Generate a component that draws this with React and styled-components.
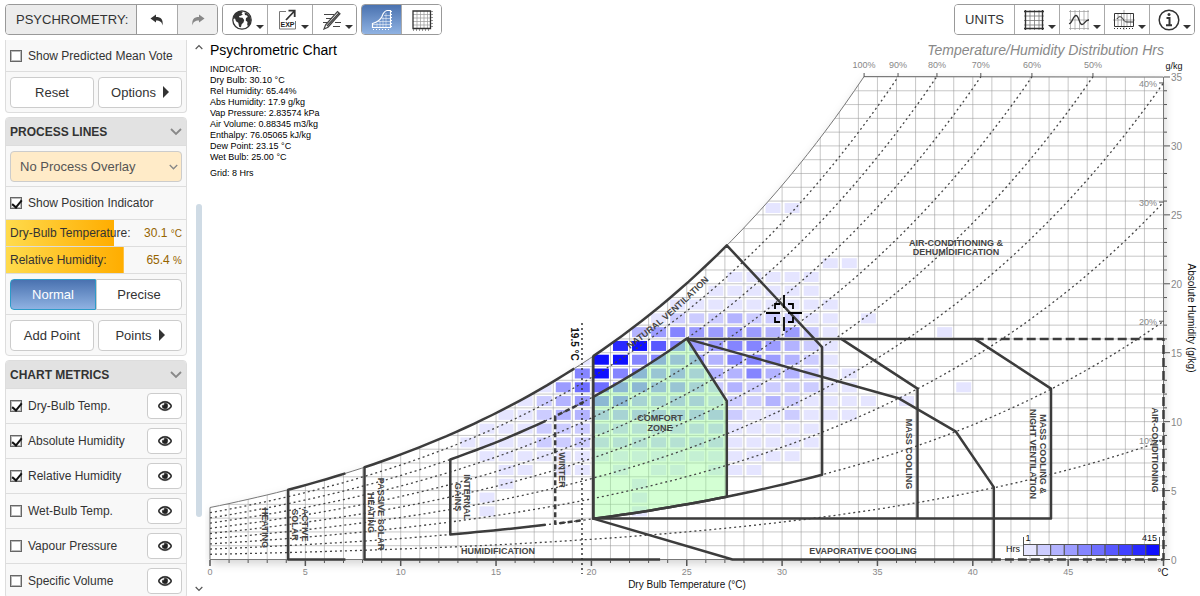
import { useState } from "react"
import styled, { createGlobalStyle, css } from "styled-components"
import { FaRegEye } from "react-icons/fa"

const GlobalStyle = createGlobalStyle`
* {
  box-sizing: border-box;
}
body {
  margin: 0;
  background: #fff;
  color: #333;
  font-family: "Liberation Sans", Arial, sans-serif;
}
button, select, input {
  font-family: inherit;
}
`

/* ---------- layout ---------- */

const Page = styled.div`
display: flex;
flex-direction: column;
height: 100vh;
min-height: 500px;
overflow: hidden;
`

const Toolbar = styled.header`
display: flex;
gap: 4px;
padding: 4px 5px 3px;
`

const Group = styled.div`
display: flex;
height: 31px;
border: 1px solid #999;
border-radius: 4px;
overflow: hidden;
background: #fff;
${({ $right }) => $right && css`margin-left: auto;`}
`

const ToolLabel = styled.h1`
display: flex;
align-items: center;
margin: 0;
padding: 0 8px 0 10px;
background: #ececec;
font-size: 13px;
font-weight: normal;
color: #333;
border-right: 1px solid #999;
`

const ToolButton = styled.button`
position: relative;
display: flex;
align-items: center;
justify-content: center;
width: ${({ $width }) => $width || 45}px;
padding: 0;
border: none;
border-right: 1px solid #aaa;
background: ${({ $active, disabled }) =>
    $active ? "linear-gradient(#4a72b0, #8fb2e2)" : disabled ? "#f0f0f0" : "#fff"};
color: ${({ $active, disabled }) => ($active ? "#fff" : disabled ? "#888" : "#333")};
font-size: 13px;

&:last-child {
  border-right: none;
}

${({ $menu }) => $menu && css`
padding-right: 6px;

&::after {
  content: "";
  position: absolute;
  right: 3px;
  bottom: 5px;
  border: 4px solid transparent;
  border-top-color: #333;
  border-bottom: none;
}
`}
`

const Main = styled.main`
display: grid;
grid-template-columns: 187px 18px 1fr;
flex: 1;
min-height: 0;
`

const Sidebar = styled.aside`
padding: 2px 0 0 5px;
overflow: hidden;
`

const Panel = styled.section`
margin-bottom: 4px;
border: 1px solid #ddd;
border-radius: 4px;
background: #f8f8f8;
overflow: hidden;
${({ $cut }) => $cut && css`
border-top: none;
border-radius: 0 0 4px 4px;
`}
`

const PanelHead = styled.h2`
display: flex;
align-items: center;
justify-content: space-between;
height: 27px;
margin: 0;
padding: 0 4px;
background: #e2e2e2;
font-size: 12px;
color: #333;
`

const Row = styled.div`
display: flex;
align-items: center;
justify-content: space-between;
gap: 4px;
height: ${({ $height }) => $height || 41}px;
padding: 0 4px;
border-top: 1px solid #ddd;

&:first-child {
  border-top: none;
}
`

const CheckLabel = styled.label`
display: flex;
align-items: center;
gap: 6px;
font-size: 12px;
`

const Checkbox = styled.input`
appearance: none;
position: relative;
width: 12px;
height: 12px;
margin: 0;
border: 1px solid #666;
background: #fff;
box-shadow: inset 0 0 0 1px #bbb;

&:checked::after {
  content: "";
  position: absolute;
  left: 3px;
  top: 0;
  width: 4px;
  height: 8px;
  border: solid #111;
  border-width: 0 2px 2px 0;
  transform: rotate(40deg);
}
`

const PanelButton = styled.button`
display: flex;
flex: 1;
align-items: center;
justify-content: center;
gap: 7px;
height: 31px;
padding: 0;
border: 1px solid #ccc;
border-radius: 4px;
background: #fff;
color: #333;
font-size: 13px;
`

const EyeButton = styled(PanelButton)`
flex: none;
width: 35px;
height: 26px;
font-size: 14px;
color: #222;

svg {
  stroke: #222;
  stroke-width: 22px;
}
`

const Arrow = styled.span`
border: 6px solid transparent;
border-left: 6px solid #333;
border-right: none;
`

const SelectWrap = styled.div`
position: relative;
flex: 1;
`

const Select = styled.select`
appearance: none;
width: 100%;
height: 31px;
padding: 0 9px;
border: 1px solid #ccc;
border-radius: 4px;
background: #ffebc8;
color: #555;
font-size: 13px;
`

const SelectMark = styled.span`
position: absolute;
right: 4px;
top: 13px;
line-height: 0;
pointer-events: none;
`

const SliderRow = styled.div`
position: relative;
display: flex;
height: 27px;
border-top: 1px solid #ddd;
`

const Slider = styled.input`
appearance: none;
width: 100%;
height: 26px;
margin: 0;
background: linear-gradient(to right, #ffdb4d, #ffad00) no-repeat;
background-size: ${({ $fill }) => $fill}% 100%;

&::-webkit-slider-thumb {
  appearance: none;
  width: 1px;
  height: 26px;
}
`

const SliderText = styled.label`
position: absolute;
inset: 0;
display: flex;
align-items: center;
justify-content: space-between;
padding: 0 4px;
font-size: 12px;
pointer-events: none;
`

const SliderValue = styled.output`
color: #966400;

small {
  font-size: 10px;
}
`

const Segments = styled.div`
display: flex;
flex: 1;
height: 31px;
`

const Segment = styled.button`
flex: 1;
padding: 0;
border: 1px solid ${({ $active }) => ($active ? "#2d9bc8" : "#ccc")};
background: ${({ $active }) => ($active ? "linear-gradient(#4a72b0, #8fb2e2)" : "#fff")};
color: ${({ $active }) => ($active ? "#fff" : "#333")};
font-size: 13px;

&:first-child {
  border-radius: 4px 0 0 4px;
}
&:last-child {
  border-radius: 0 4px 4px 0;
}
`

const ScrollRail = styled.div`
display: flex;
flex-direction: column;
align-items: center;
padding: 6px 0 4px 6px;
`

const ScrollGap = styled.div`
flex: ${({ $size }) => $size};
`

const ScrollThumb = styled.div`
flex: 308;
width: 6px;
border-radius: 3px;
background: #cfdbe5;
`

const ChartArea = styled.section`
position: relative;
min-width: 0;
`

const ChartOverlay = styled.div`
position: absolute;
inset: 4px 36px auto 5px;
display: flex;
justify-content: space-between;
color: #000;
`

const ChartTitle = styled.h2`
margin: 0 0 5px;
font-size: 14px;
line-height: 17px;
font-weight: normal;
`

const ChartCaption = styled.p`
margin: 0;
color: #888;
font-size: 14px;
line-height: 17px;
font-style: italic;
`

const Readout = styled.p`
margin: 0 0 5px;
font-size: 9px;
line-height: 11px;
white-space: pre-line;
`

const ChartSvg = styled.svg`
display: block;
width: 100%;
height: auto;
`

const ZoneText = styled.text`
fill: #444;
font-size: 9px;
font-weight: bold;
text-anchor: middle;
dominant-baseline: central;
`

const AxisText = styled.text`
fill: ${({ $dark }) => ($dark ? "#111" : "#888")};
font-size: ${({ $size }) => $size || 9}px;
text-anchor: ${({ $anchor }) => $anchor || "middle"};
dominant-baseline: central;
`

/* ---------- icons ---------- */

const Chevron = ({ w = 12, flip, color = "#888" }) => (
  <svg width={w} height={w / 2 + 2} viewBox="0 0 12 8" fill="none" stroke={color} strokeWidth="1.8">
    <path d={flip ? "M1 7 6 2l5 5" : "M1 1l5 5 5-5"} />
  </svg>
)

const UndoIcon = ({ flip }) => (
  <svg width="14" height="14" viewBox="0 0 14 14" fill="currentColor">
    <path
      transform={flip ? "matrix(-1 0 0 1 14 0)" : undefined}
      d="M.5 5.500 6 1.500v2.500c5 0 7.500 2.500 6.500 8.500-.6-3.600-2.500-5-6.500-5V9.500z"
    />
  </svg>
)

const GlobeIcon = () => (
  <svg width="20" height="20" viewBox="0 0 20 20">
    <circle cx="10" cy="10" r="9.200" fill="#fff" stroke="#333" strokeWidth="1.300" />
    <path
      fill="#333"
      d="M1 9C1.500 5 4.500 1.800 8.500 1l2.500.8-1.500 1.700 1.300 1-2 1.300L7 6l.5 1.500 3 .3 1.700 2.200-.7 2.500-1.800 1.800-.8 3-1.800-.5-.8-4-2.300-1.500L3 8.500z"
    />
    <path fill="#333" d="M12.500 2.200l3 1.300 2.500 3L19 10l-1 4-2 2.500-.8-2 .3-2.500-1.800-1.500.3-2.500 1.800-1-.8-1.500-2-.5z" />
  </svg>
)

const ExportIcon = () => (
  <svg width="20" height="22" viewBox="0 0 20 22" fill="none" stroke="#333">
    <path d="M9 2.500H2.500v17.500h16v-8" stroke="#777" />
    <path d="M9 11l8.500-9M11.500 1.700h6.200v6.300" strokeWidth="1.800" />
    <text x="10.500" y="18" fill="#222" stroke="none" fontSize="7" fontWeight="bold" textAnchor="middle">EXP</text>
  </svg>
)

const PencilIcon = () => (
  <svg width="20" height="20" viewBox="0 0 20 20" fill="none" stroke="#444">
    <path d="M2 4.500h10M4 8.500h6M1 12.500h5M13 12.500h6M11 16.500h7" />
    <path d="M3.500 15 15.500 1.500l2.500 2.200L6 17.200l-4 1.800zM5 16 17 2.800" fill="#fff" strokeWidth="1.200" />
  </svg>
)

const PsychroIcon = () => (
  <svg width="22" height="22" viewBox="0 0 22 22" fill="none" stroke="#fff">
    <path d="M6 14v4M9 12v6M12 8v10M15 4v14M2 15.500h17M7 12.500h12M11 9.500h8M13 6.500h6" strokeWidth=".5" />
    <path d="M1.500 18.500v-4c5-1.500 8-3.500 9.500-7 1-3 2.500-5.500 5-6h3.500v17z" strokeWidth="1.200" />
    <path d="M2 20.500h18M20.500 2v18" strokeDasharray="1 2" />
  </svg>
)

const MeshIcon = () => (
  <svg width="22" height="22" viewBox="0 0 22 22" fill="none" stroke="#333">
    <path d="M6 2v17M9.500 2v17M13 2v17M16.500 2v17M2 5.500h17M2 9h17M2 12.500h17M2 16h17" stroke="#999" strokeWidth=".7" />
    <path d="M2 2h17.500v17.500H2z" strokeWidth="1.300" />
    <path d="M2 21h18M21 2v18" strokeDasharray="1 2" />
  </svg>
)

const GridIcon = () => (
  <svg width="22" height="22" viewBox="0 0 22 22" fill="none" stroke="#333">
    <path d="M7 1v20M11.500 1v20M16 1v20M1 7h20M1 11.500h20M1 16h20" stroke="#777" strokeWidth=".8" />
    <path d="M2.500 1v20M19.500 1v20M1 2.500h20M1 19.500h20" strokeWidth="1.400" />
  </svg>
)

const CurveIcon = () => (
  <svg width="22" height="22" viewBox="0 0 22 22" fill="none" stroke="#333">
    <path d="M2.500 1v20M7 1v20M11.500 1v20M16 1v20M20 1v20M1 2.500h20M1 19.500h20M1 11h20" stroke="#999" strokeWidth=".7" />
    <path d="M1 14.500c3 1 4-8 7-8s3 9 6 9 3-5 7-4.500" strokeWidth="1.300" />
  </svg>
)

const RangeIcon = () => (
  <svg width="24" height="22" viewBox="0 0 24 22" fill="none" stroke="#333">
    <path d="M6 5v12M9.500 5v12M15 5v12M18.500 5v12M12 1v20M1 11h22" stroke="#888" strokeWidth=".7" />
    <path d="M2.500 4.500h19v13h-19z" />
    <path d="M5 10c1-3 5-3 6 0 1 2 2 3 4 3h6" />
    <path d="M2 19.500h20" strokeDasharray="1 2" />
  </svg>
)

const InfoIcon = () => (
  <svg width="22" height="22" viewBox="0 0 22 22" fill="none" stroke="#333" strokeWidth="1.500">
    <circle cx="11" cy="11" r="9.800" />
    <path d="M8.500 9h3v7M8 16.200h6" strokeWidth="2" />
    <circle cx="11" cy="5.500" r="1.500" fill="#333" stroke="none" />
  </svg>
)

/* ---------- chart maths ---------- */

const px = (t) => 210 + t * 19.07
const py = (w) => 559.5 - w * 13.786
const pt = (t, w) => `${px(t).toFixed(1)},${py(w).toFixed(1)}`
const line = (...pts) => pts.map(([t, w]) => pt(t, w)).join(" ")

// saturated humidity ratio in g/kg
const wSat = (t) => {
  const p = 610.94 * Math.exp((17.625 * t) / (t + 243.04))
  return (622 * p) / (101325 - p)
}

// points along a constant relative humidity line
const rhLine = (rh, from, to) => {
  const n = Math.ceil(Math.abs(to - from) * 2)
  return Array.from({ length: n + 1 }, (_, i) => {
    const t = from + ((to - from) * i) / n
    return pt(t, rh * wSat(t))
  }).join(" ")
}

// temperature at which an RH line leaves the chart
const exitTemp = (rh) => {
  let t = 20
  while (t < 50 && rh * wSat(t) < 35) t += 0.02
  return Math.min(t, 50)
}

const range = (n, start = 0) => Array.from({ length: n }, (_, i) => i + start)

const region = `${rhLine(1, 0, exitTemp(1))} ${pt(50, 35)} ${pt(50, 0)} ${pt(0, 0)}`

// hours per cell, as legend steps: [g/kg, first °C, steps]
const bins = [
  [25, 29, "11"],
  [21, 32, "11"],
  [20, 27, "11111"],
  [19, 26, "111111"],
  [18, 24, "111111111"],
  [17, 23, "122232221101"],
  [16, 22, "34544443421000001"],
  [15, 21, "9A7544554321"],
  [14, 19, "1AA55443554321"],
  [13, 19, "5A5544333533211"],
  [12, 17, "14665544323222211000001"],
  [11, 16, "123455333322232111101"],
  [10, 15, "1123333333332112111"],
  [9, 14, "111222222222211111"],
  [8, 13, "1111222222222211111"],
  [7, 14, "11111111111111111"],
  [6, 15, "11011010110111"],
  [5, 15, "10000001"],
  [4, 14, "100000001"],
  [3, 14, "100000001"],
]

const ramp = ["#e5e5ff", "#ccccff", "#b3b3ff", "#9c9cff", "#8585ff", "#6e6eff", "#5858ff", "#4141ff", "#2929ff", "#1010ff"]

const cells = bins.flatMap(([w, t0, steps]) =>
  [...steps].map((s, i) => ({ t: t0 + i, w, level: parseInt(s, 16) })).filter((c) => c.level)
)

const solidZones = [
  `${rhLine(1, 7.1, 4.1)} ${line([4.1, 0], [7.1, 0])}`,
  `${rhLine(1, 19.1, 8.1)} ${line([8.1, 0], [23.6, 0])}`,
  `${rhLine(0.8, 17.6, 12.6)} ${rhLine(0.2, 12.6, 17.6)}`,
  `${rhLine(1, 20.1, 27.1)} ${pt(32.1, 15.4)} ${rhLine(0.2, 32.1, 20.1)} ${pt(20.1, 14.8)}`,
  line([25, 16], [33.1, 16], [37.1, 12.4], [37.1, 2.97]),
  line([33.1, 16], [40.1, 16], [44.1, 12.4], [44.1, 2.97], [20.1, 2.97]),
  line([25, 16], [36.1, 11.7], [39.1, 9.3], [41.1, 5.25], [41.1, 0], [27.4, 0], [20.1, 2.97]),
]

const comfort = `${rhLine(0.8, 20.1, 25)} ${pt(27.1, 11.5)} ${rhLine(0.2, 27.1, 20.1)}`

const sideLabels = [
  ["HEATING", 265, 528],
  ["ACTIVE", 305, 525],
  ["SOLAR", 295, 525],
  ["PASSIVE SOLAR", 381, 514],
  ["HEATING", 371, 513],
  ["INTERNAL", 467, 497],
  ["GAINS", 458, 497],
  ["WINTER", 562, 470],
  ["MASS COOLING", 909, 454],
  ["MASS COOLING &", 1043, 454],
  ["NIGHT VENTILATION", 1033, 454],
  ["AIR-CONDITIONING", 1155, 450],
]

/* ---------- chart ---------- */

const Chart = () => (
  <ChartSvg viewBox="205 38 995 558" role="img" aria-label="Psychrometric chart">
    <defs>
      <clipPath id="region">
        <polygon points={region} />
      </clipPath>
      <filter id="shade" x="-5%" y="-5%" width="110%" height="110%">
        <feDropShadow dx="1" dy="4" stdDeviation="5" floodColor="#000" floodOpacity=".18" />
      </filter>
      <path id="ventPath" d="M625 349 Q669 317 710 275" />
    </defs>

    <polygon points={region} fill="#fff" filter="url(#shade)" />
    <g clipPath="url(#region)">
      {cells.map(({ t, w, level }) => (
        <rect key={`${t}-${w}`} x={px(t) + 2.5} y={py(w + 1) + 2} width="15" height="10" fill={ramp[level - 1]} />
      ))}
      <g stroke="#999" strokeOpacity=".55">
        {range(50, 1).map((t) => <line key={t} x1={px(t)} x2={px(t)} y1={py(0)} y2={py(35)} />)}
        {range(35, 1).map((w) => <line key={w} x1={px(0)} x2={px(50)} y1={py(w)} y2={py(w)} />)}
      </g>
    </g>
    <polygon points={comfort} fill="#96ff96" fillOpacity=".42" />
    <polygon points={region} fill="none" stroke="#777" />

    <g fill="none" stroke="#444" strokeWidth="1.300" strokeDasharray="2 3">
      {range(9, 1).map((n) => <polyline key={n} points={rhLine(n / 10, 0, exitTemp(n / 10))} />)}
    </g>

    <g fill="none" stroke="#3c3c3c" strokeWidth="2.500" strokeLinejoin="round">
      {solidZones.map((p) => <polyline key={p} points={p} />)}
      <polygon points={comfort} />
      <g strokeDasharray="9 4">
        <polyline points={line([40.1, 16], [50, 16], [50, 0], [41.1, 0])} />
      </g>
      <polyline strokeDasharray="5 3" points={`${rhLine(0.8, 19.6, 18.1)} ${rhLine(0.2, 18.1, 19.6)}`} />
    </g>
    <line x1="582" x2="582" y1="323" y2="574" stroke="#333" strokeWidth="1.500" strokeDasharray="2 3" />

    <g stroke="#555">
      {range(51).map((t) => (
        <line key={t} x1={px(t)} x2={px(t)} y1="560" y2={t % 5 ? 563 : 566} strokeWidth={t % 5 ? 1 : 1.5} />
      ))}
      {range(36).map((w) => (
        <line key={w} y1={py(w)} y2={py(w)} x1="1164" x2={w % 5 ? 1167 : 1170} />
      ))}
    </g>
    {range(10).map((n) => <AxisText key={n} x={px(n * 5)} y="572">{n * 5}</AxisText>)}
    {range(8).map((n) => <AxisText key={n} x="1171" y={py(n * 5) + 1} $size={10} $anchor="start">{n * 5}</AxisText>)}
    {[1, 0.9, 0.8, 0.7, 0.6, 0.5].map((rh) => (
      <g key={rh}>
        <line x1={px(exitTemp(rh))} x2={px(exitTemp(rh))} y1="73" y2="77" stroke="#555" />
        <AxisText x={px(exitTemp(rh))} y="65">{rh * 100}%</AxisText>
      </g>
    ))}
    {[40, 30, 20, 10].map((rh) => (
      <g key={rh}>
        <line x1="1159" x2="1164" y1={py((rh * wSat(50)) / 100)} y2={py((rh * wSat(50)) / 100)} stroke="#555" />
        <AxisText x="1157" y={py((rh * wSat(50)) / 100) + 1} $anchor="end">{rh}%</AxisText>
      </g>
    ))}

    <AxisText $dark x="1174" y="66" $size={9}>g/kg</AxisText>
    <AxisText $dark x="1163" y="572" $size={10}>°C</AxisText>
    <AxisText $dark x="687" y="584" $size={10}>Dry Bulb Temperature (°C)</AxisText>
    <AxisText $dark transform="translate(1191 318) rotate(90)" $size={10}>Absolute Humidity (g/kg)</AxisText>

    <ZoneText x="956" y="243">AIR-CONDITIONING &amp;</ZoneText>
    <ZoneText x="956" y="252">DEHUMIDIFICATION</ZoneText>
    <ZoneText x="660" y="418">COMFORT</ZoneText>
    <ZoneText x="660" y="428">ZONE</ZoneText>
    <ZoneText x="498" y="551">HUMIDIFICATION</ZoneText>
    <ZoneText x="863" y="551">EVAPORATIVE COOLING</ZoneText>
    {sideLabels.map(([text, x, y]) => (
      <ZoneText key={text + x} transform={`translate(${x} ${y}) rotate(90)`}>{text}</ZoneText>
    ))}
    <ZoneText>
      <textPath href="#ventPath" startOffset="50%">NATURAL VENTILATION</textPath>
    </ZoneText>
    <AxisText $dark transform="translate(574 344) rotate(90)" $size={10} fontWeight="bold">19.5 °C</AxisText>

    <g fill="none" stroke="#000" strokeWidth="1.800">
      <path d="M766 313h14M788 313h14M784 295v13M784 317v14" />
      <path d="M775 309v-5h5M788 304h5v5M793 317v5h-5M780 322h-5v-5" />
    </g>

    <g>
      {ramp.map((color, i) => (
        <rect key={color} x={1023.5 + i * 13.6} y="544.500" width="13.600" height="11" fill={color} stroke="#555" />
      ))}
      <path d="M1023.500 544v-7M1159.500 544v-7" stroke="#555" />
      <AxisText $dark x="1028" y="538">1</AxisText>
      <AxisText $dark x="1157" y="538" $anchor="end">415</AxisText>
      <AxisText $dark x="1020" y="549" $anchor="end">Hrs</AxisText>
    </g>
  </ChartSvg>
)

const indicator = `INDICATOR:
Dry Bulb: 30.10 °C
Rel Humidity: 65.44%
Abs Humidity: 17.9 g/kg
Vap Pressure: 2.83574 kPa
Air Volume: 0.88345 m3/kg
Enthalpy: 76.05065 kJ/kg
Dew Point: 23.15 °C
Wet Bulb: 25.00 °C`

const metrics = [
  ["Dry-Bulb Temp.", true],
  ["Absolute Humidity", true],
  ["Relative Humidity", true],
  ["Wet-Bulb Temp.", false],
  ["Vapour Pressure", false],
  ["Specific Volume", false],
]

const Check = ({ label, on }) => (
  <CheckLabel>
    <Checkbox type="checkbox" defaultChecked={on} />
    {label}
  </CheckLabel>
)

const ValueSlider = ({ id, label, unit, start, max }) => {
  const [value, setValue] = useState(start)
  return (
    <SliderRow>
      <Slider
        id={id}
        type="range"
        min="0"
        max={max}
        step="0.1"
        value={value}
        $fill={(value / max) * 100}
        onChange={(e) => setValue(Number(e.target.value))}
      />
      <SliderText htmlFor={id}>
        {label}
        <SliderValue>{value} <small>{unit}</small></SliderValue>
      </SliderText>
    </SliderRow>
  )
}

const App = () => {
  const [mode, setMode] = useState("Normal")

  return (
    <Page>
      <GlobalStyle />
      <Toolbar>
        <Group>
          <ToolLabel>PSYCHROMETRY:</ToolLabel>
          <ToolButton $width={41} aria-label="Undo"><UndoIcon /></ToolButton>
          <ToolButton $width={39} aria-label="Redo" disabled><UndoIcon flip /></ToolButton>
        </Group>
        <Group>
          <ToolButton $menu aria-label="Location"><GlobeIcon /></ToolButton>
          <ToolButton $menu aria-label="Export"><ExportIcon /></ToolButton>
          <ToolButton $menu $width={43} aria-label="Edit"><PencilIcon /></ToolButton>
        </Group>
        <Group>
          <ToolButton $active $width={40} aria-label="Psychrometric chart"><PsychroIcon /></ToolButton>
          <ToolButton $width={39} aria-label="Grid chart"><MeshIcon /></ToolButton>
        </Group>
        <Group $right>
          <ToolButton $width={60}>UNITS</ToolButton>
          <ToolButton $menu aria-label="Grid"><GridIcon /></ToolButton>
          <ToolButton $menu aria-label="Curves"><CurveIcon /></ToolButton>
          <ToolButton $menu aria-label="Range"><RangeIcon /></ToolButton>
          <ToolButton $menu $width={44} aria-label="Information"><InfoIcon /></ToolButton>
        </Group>
      </Toolbar>

      <Main>
        <Sidebar>
          <Panel $cut>
            <Row $height={31}><Check label="Show Predicted Mean Vote" /></Row>
            <Row>
              <PanelButton>Reset</PanelButton>
              <PanelButton>Options <Arrow /></PanelButton>
            </Row>
          </Panel>

          <Panel>
            <PanelHead>PROCESS LINES <Chevron /></PanelHead>
            <Row>
              <SelectWrap>
                <Select aria-label="Process overlay">
                  <option>No Process Overlay</option>
                </Select>
                <SelectMark><Chevron w={9} /></SelectMark>
              </SelectWrap>
            </Row>
            <Row $height={33}><Check label="Show Position Indicator" on /></Row>
            <ValueSlider id="dry-bulb" label="Dry-Bulb Temperature:" unit="°C" start={30.1} max={50} />
            <ValueSlider id="rel-hum" label="Relative Humidity:" unit="%" start={65.4} max={100} />
            <Row>
              <Segments>
                {["Normal", "Precise"].map((name) => (
                  <Segment key={name} $active={mode === name} onClick={() => setMode(name)}>{name}</Segment>
                ))}
              </Segments>
            </Row>
            <Row>
              <PanelButton>Add Point</PanelButton>
              <PanelButton>Points <Arrow /></PanelButton>
            </Row>
          </Panel>

          <Panel>
            <PanelHead>CHART METRICS <Chevron /></PanelHead>
            {metrics.map(([label, on]) => (
              <Row key={label} $height={35}>
                <Check label={label} on={on} />
                <EyeButton aria-label={`Show ${label}`}><FaRegEye /></EyeButton>
              </Row>
            ))}
          </Panel>
        </Sidebar>

        <ScrollRail>
          <Chevron w={8} flip color="#555" />
          <ScrollGap $size={152} />
          <ScrollThumb />
          <ScrollGap $size={68} />
          <Chevron w={8} color="#555" />
        </ScrollRail>

        <ChartArea>
          <Chart />
          <ChartOverlay>
            <div>
              <ChartTitle>Psychrometric Chart</ChartTitle>
              <Readout>{indicator}</Readout>
              <Readout>Grid: 8 Hrs</Readout>
            </div>
            <ChartCaption>Temperature/Humidity Distribution Hrs</ChartCaption>
          </ChartOverlay>
        </ChartArea>
      </Main>
    </Page>
  )
}

export default App
